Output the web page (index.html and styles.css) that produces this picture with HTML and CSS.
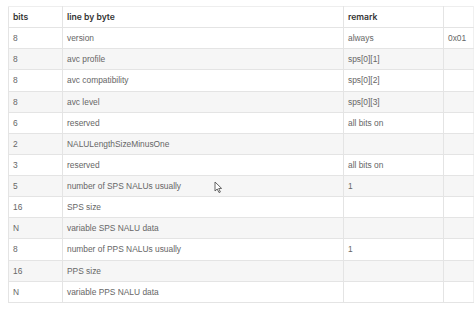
FILE: index.html
```html
<!DOCTYPE html>
<html>
<head>
<meta charset="utf-8">
<link rel="stylesheet" href="styles.css">
</head>
<body>
<div class="page">
<table class="grid">
  <colgroup>
    <col class="c-bits"><col class="c-line"><col class="c-remark"><col class="c-val">
  </colgroup>
  <thead>
    <tr><th>bits</th><th>line by byte</th><th>remark</th><th></th></tr>
  </thead>
  <tbody>
    <tr><td>8</td><td>version</td><td>always</td><td>0x01</td></tr>
    <tr><td>8</td><td>avc profile</td><td>sps[0][1]</td><td></td></tr>
    <tr><td>8</td><td>avc compatibility</td><td>sps[0][2]</td><td></td></tr>
    <tr><td>8</td><td>avc level</td><td>sps[0][3]</td><td></td></tr>
    <tr><td>6</td><td>reserved</td><td>all bits on</td><td></td></tr>
    <tr><td>2</td><td>NALULengthSizeMinusOne</td><td></td><td></td></tr>
    <tr><td>3</td><td>reserved</td><td>all bits on</td><td></td></tr>
    <tr><td>5</td><td>number of SPS NALUs usually</td><td>1</td><td></td></tr>
    <tr><td>16</td><td>SPS size</td><td></td><td></td></tr>
    <tr><td>N</td><td>variable SPS NALU data</td><td></td><td></td></tr>
    <tr><td>8</td><td>number of PPS NALUs usually</td><td>1</td><td></td></tr>
    <tr><td>16</td><td>PPS size</td><td></td><td></td></tr>
    <tr><td>N</td><td>variable PPS NALU data</td><td></td><td></td></tr>
  </tbody>
</table>
<svg class="cursor" width="9" height="13" viewBox="0 0 9 13">
  <path d="M1 1 L1 10 L3.2 8 L5 11.6 L6.4 11 L4.7 7.5 L7.6 7.4 Z" fill="#fff" stroke="#555" stroke-width="0.9" stroke-linejoin="round"/>
</svg>
</div>
</body>
</html>
```
FILE: styles.css
```css
html, body {
  margin: 0;
  padding: 0;
  background: #fff;
}
.page {
  position: relative;
  width: 474px;
  height: 313px;
  overflow: hidden;
  padding-top: 6px;
  box-sizing: border-box;
}
.grid {
  margin-left: 8px;
  width: 465px;
  border-collapse: collapse;
  table-layout: fixed;
  font-family: "Liberation Sans", Arial, sans-serif;
  font-size: 8.4px;
  color: #666;
}
.c-bits { width: 54px; }
.c-line { width: 281px; }
.c-remark { width: 100px; }
.c-val { width: 30px; }
.grid th, .grid td {
  height: 20.14px;
  padding: 0 0 0 4px;
  border: 1px solid #e4e4e4;
  text-align: left;
  vertical-align: middle;
  white-space: nowrap;
  overflow: hidden;
}
.grid th {
  font-family: Inter, "Liberation Sans", sans-serif;
  font-weight: 600;
  color: #333;
  font-size: 8.6px;
}
.grid th:last-child, .grid td:last-child {
  border-right-color: #f0f0f0;
}
.grid thead tr th {
  border-top-color: #eeeeee;
}
.grid tbody tr:nth-child(even) {
  background: #f6f6f6;
}
.cursor {
  position: absolute;
  left: 214px;
  top: 181px;
}
```
